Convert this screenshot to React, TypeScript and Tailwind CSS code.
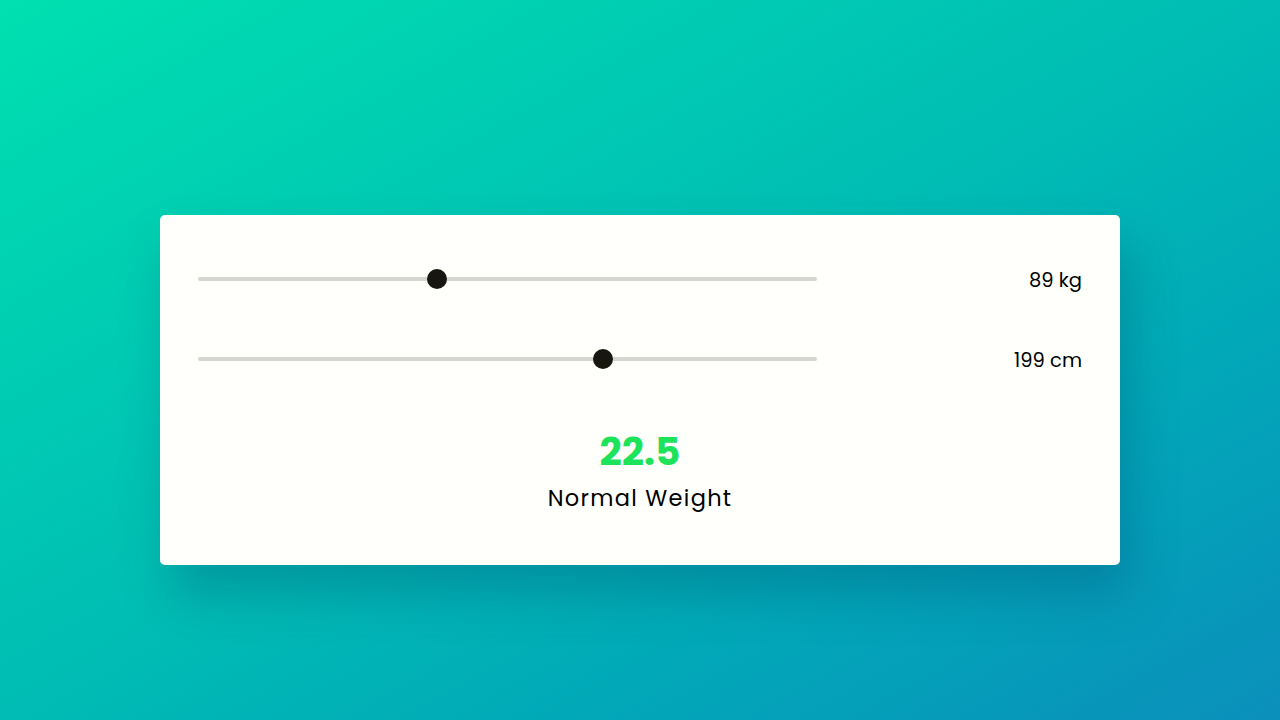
const sliders = [
  { label: '89 kg', pos: 0.386 },
  { label: '199 cm', pos: 0.654 },
]

function Slider({ pos }: { pos: number }) {
  return (
    <div className="relative w-[619px] h-10 flex items-center">
      <div className="w-full h-[4px] rounded-full bg-[#d6d6d0]" />
      <div
        className="absolute top-1/2 w-5 h-5 -translate-x-1/2 -translate-y-1/2 rounded-full bg-[#17170f]"
        style={{ left: `${pos * 100}%` }}
      />
    </div>
  )
}

export default function App() {
  return (
    <div className="w-full h-[720px] flex justify-center pt-[215px] bg-gradient-to-br from-[#00e0b0] via-[#00bcb4] to-[#0b8fbb] font-['Poppins','Inter','Noto_Sans',sans-serif]">
      <div className="w-[960px] h-[350px] rounded-[5px] bg-[#fffffb] px-[38px] pt-[44px] shadow-[10px_30px_50px_rgba(0,70,110,0.3)]">
        <div className="flex flex-col gap-10">
          {sliders.map((s) => (
            <div key={s.label} className="flex items-center justify-between">
              <Slider pos={s.pos} />
              <span className="text-[19.5px] text-black leading-none pt-[3px]">{s.label}</span>
            </div>
          ))}
        </div>
        <div className="flex flex-col items-center mt-[52px]">
          <div className="text-[39px] leading-[42px] font-bold text-[#1de35b]">22.5</div>
          <div className="mt-[10px] text-[22.5px] leading-[30px] tracking-[1.3px] text-black">Normal Weight</div>
        </div>
      </div>
    </div>
  )
}
